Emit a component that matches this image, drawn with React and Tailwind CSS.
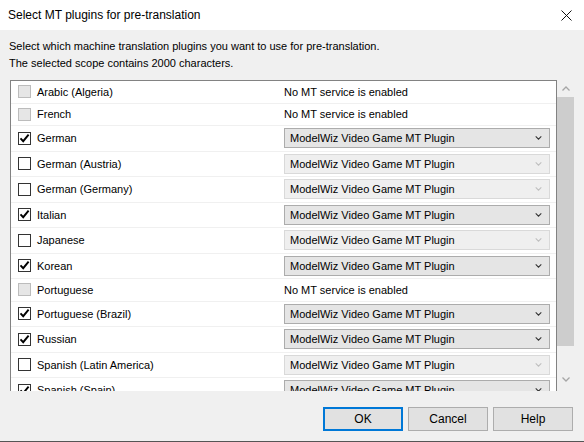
import React from 'react';

const languages = [
  { name: 'Arabic (Algeria)', state: 'none' },
  { name: 'French', state: 'none' },
  { name: 'German', state: 'on' },
  { name: 'German (Austria)', state: 'off' },
  { name: 'German (Germany)', state: 'off' },
  { name: 'Italian', state: 'on' },
  { name: 'Japanese', state: 'off' },
  { name: 'Korean', state: 'on' },
  { name: 'Portuguese', state: 'none' },
  { name: 'Portuguese (Brazil)', state: 'on' },
  { name: 'Russian', state: 'on' },
  { name: 'Spanish (Latin America)', state: 'off' },
  { name: 'Spanish (Spain)', state: 'on' },
];

const Chevron = ({ className, w = 8, h = 5 }) => (
  <svg width={w} height={h} viewBox="0 0 8 5" className={className}>
    <path d="M0.5 0.5 L4 4 L7.5 0.5" fill="none" stroke="currentColor" strokeWidth="1.3" />
  </svg>
);

const CheckBox = ({ state }) => {
  if (state === 'none') {
    return <div className="w-[13px] h-[13px] border border-[#bcbcbc] bg-[#e6e6e6]" />;
  }
  return (
    <div className="w-[13px] h-[13px] border border-[#333] bg-white flex items-center justify-center">
      {state === 'on' && (
        <svg width="11" height="11" viewBox="0 0 11 11">
          <path d="M1.5 5.3 L4.2 8.2 L9.6 1.6" fill="none" stroke="#000" strokeWidth="1.9" />
        </svg>
      )}
    </div>
  );
};

const PluginSelect = ({ enabled }) => (
  <div
    className={
      'h-[20px] flex items-center justify-between pl-[5px] pr-[7px] border ' +
      (enabled ? 'bg-[#e5e5e5] border-[#acacac]' : 'bg-[#efefef] border-[#d9d9d9]')
    }
  >
    <span>ModelWiz Video Game MT Plugin</span>
    <Chevron w={7} h={4} className={enabled ? 'text-[#333]' : 'text-[#bfbfbf]'} />
  </div>
);

const Row = ({ lang }) => {
  const hasPlugin = lang.state !== 'none';
  return (
    <div
      className={
        'flex items-center border-b border-[#f0f0f0] ' + (hasPlugin ? 'h-[25.5px]' : 'h-[22.5px]')
      }
    >
      <div className="w-[273px] flex items-center pl-[7px] gap-[6px] shrink-0">
        <CheckBox state={lang.state} />
        <span>{lang.name}</span>
      </div>
      <div className="flex-1 pr-[6px]">
        {hasPlugin ? <PluginSelect enabled={lang.state === 'on'} /> : <span>No MT service is enabled</span>}
      </div>
    </div>
  );
};

export default function App() {
  return (
    <div className="w-[584px] h-[442px] bg-[#f0f0f0] flex flex-col overflow-hidden text-black font-['Segoe_UI','Liberation_Sans',Arial,sans-serif] text-[11px]">
      {/* window title */}
      <div className="h-[30px] bg-white flex items-center justify-between pl-[8px] pr-[12px] shrink-0">
        <span className="text-[12px]">Select MT plugins for pre-translation</span>
        <svg width="11" height="11" viewBox="0 0 11 11">
          <path d="M0.5 0.5 L10.5 10.5 M10.5 0.5 L0.5 10.5" stroke="#111" strokeWidth="1" />
        </svg>
      </div>

      <div className="pl-[9px] pt-[8px] leading-[17px] shrink-0">
        <p>Select which machine translation plugins you want to use for pre-translation.</p>
        <p>The selected scope contains 2000 characters.</p>
      </div>

      {/* language list with scrollbar */}
      <div className="mt-[8px] ml-[10px] mr-[10px] h-[311px] flex shrink-0 overflow-hidden">
        <div className="flex-1 bg-white border-l border-t border-r border-[#828282]">
          {languages.map((lang) => (
            <Row key={lang.name} lang={lang} />
          ))}
        </div>
        <div className="w-[17px] flex flex-col items-center">
          <div className="h-[17px] flex items-center justify-center">
            <Chevron className="text-[#a6a6a6] rotate-180" />
          </div>
          <div className="w-[17px] h-[249px] bg-[#cdcdcd]" />
          <div className="flex-1" />
          <div className="h-[17px] flex items-center justify-center mb-[3px]">
            <Chevron className="text-[#a6a6a6]" />
          </div>
        </div>
      </div>

      <div className="flex justify-end gap-[5px] pr-[11px] mt-[16px] shrink-0 text-[12px]">
        <button className="w-[80px] h-[24px] bg-[#e1e1e1] border-2 border-[#0078d7]">OK</button>
        <button className="w-[80px] h-[24px] bg-[#e1e1e1] border border-[#adadad]">Cancel</button>
        <button className="w-[80px] h-[24px] bg-[#e1e1e1] border border-[#adadad]">Help</button>
      </div>

      <div className="flex-1" />
      <div className="h-px bg-[#555] shrink-0" />
    </div>
  );
}
